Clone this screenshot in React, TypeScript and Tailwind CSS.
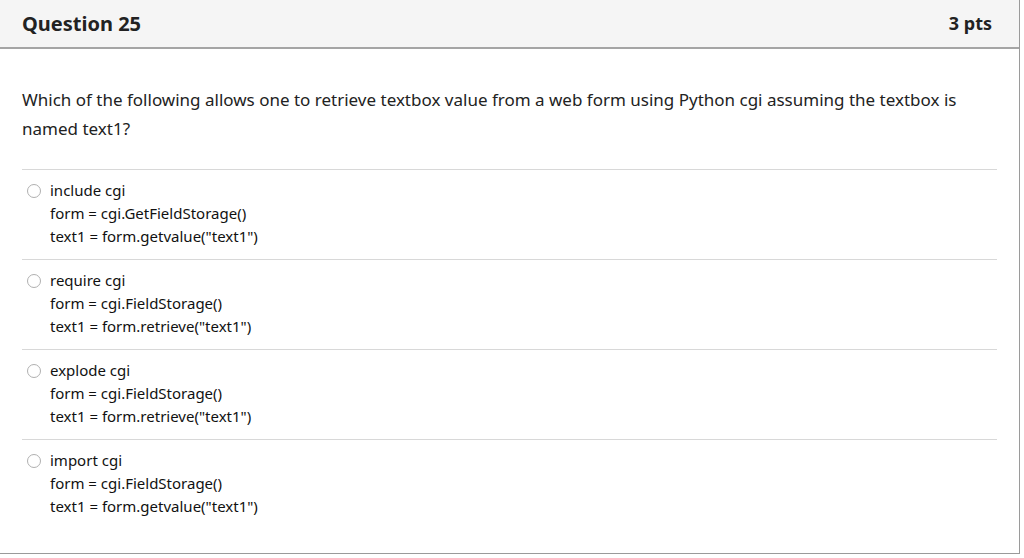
const OPTIONS = [
  ["include cgi", "form = cgi.GetFieldStorage()", 'text1 = form.getvalue("text1")'],
  ["require cgi", "form = cgi.FieldStorage()", 'text1 = form.retrieve("text1")'],
  ["explode cgi", "form = cgi.FieldStorage()", 'text1 = form.retrieve("text1")'],
  ["import cgi", "form = cgi.FieldStorage()", 'text1 = form.getvalue("text1")'],
];

export default function App() {
  return (
    <div className="h-[558px] w-[1024px] bg-white font-['Lato','Liberation_Sans',sans-serif] text-[#2d3b45]">
      <div className="mr-[4px] h-[554px] border-r border-b border-[#9a9a9a]">
        {/* header */}
        <div className="flex h-[49px] items-center justify-between border-b-2 border-[#a5a5a5] bg-[#f5f5f5] pl-[22px] pr-[27px] text-[20px] font-bold text-[#222]">
          <span>Question 25</span>
          <span className="text-[18px]">3 pts</span>
        </div>

        <div className="px-[22px]">
          <p className="pt-[36px] pb-[26px] text-[17px] leading-[29px] text-[#222]">
            Which of the following allows one to retrieve textbox value from a web form using Python cgi assuming the textbox is named text1?
          </p>

          {OPTIONS.map((lines, i) => (
            <div key={i} className="flex h-[90px] border-t border-[#d8d8d8] pt-[9px]">
              <div className="w-[28px] pt-[5px] pl-[5px]">
                <div className="h-[14px] w-[14px] rounded-full border border-[#b0b0b0] bg-white" />
              </div>
              <div className="text-[15px] leading-[23px] text-[#111]">
                {lines.map((l) => (
                  <div key={l}>{l}</div>
                ))}
              </div>
            </div>
          ))}
        </div>
      </div>
    </div>
  );
}
